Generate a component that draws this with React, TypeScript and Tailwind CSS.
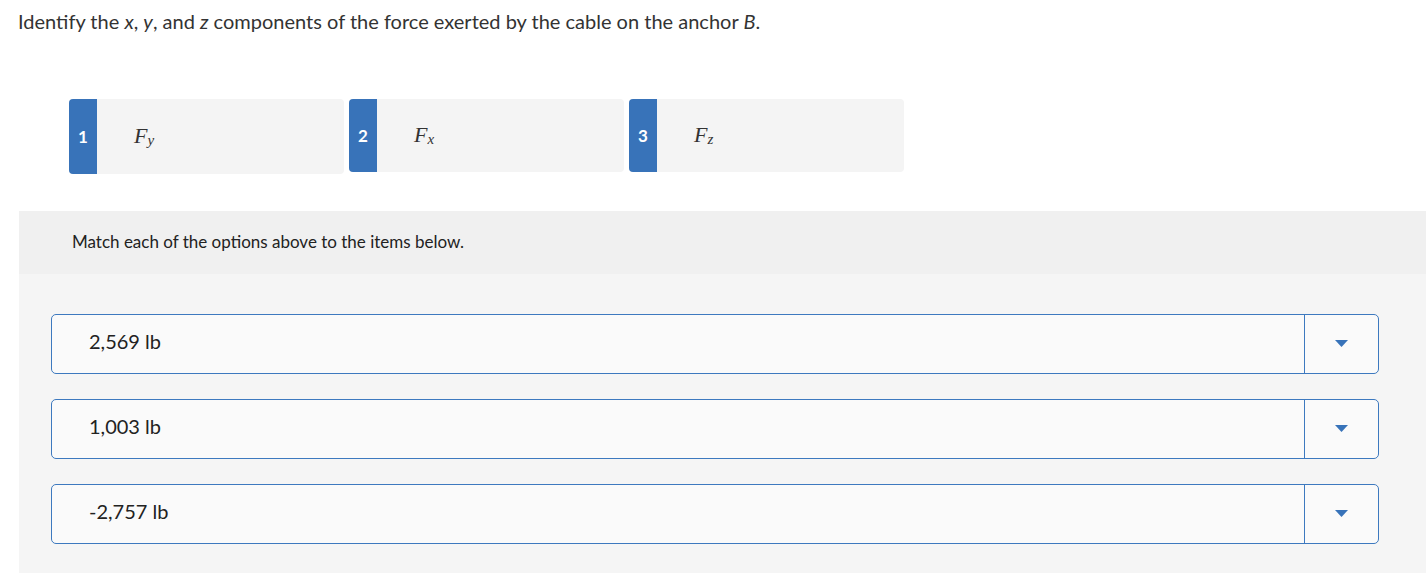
import { ReactNode } from "react";

const font = { fontFamily: "Lato, 'Liberation Sans', sans-serif" };

function MathVar({ sub }: { sub: string }) {
  return (
    <span
      className="text-[22px] text-[#333]"
      style={{ fontFamily: "'Liberation Serif', 'DejaVu Serif', serif" }}
    >
      <i>F</i>
      <sub className="text-[15px] italic relative top-[2px]">{sub}</sub>
    </span>
  );
}

function OptionCard({ num, children, tall }: { num: string; children: ReactNode; tall?: boolean }) {
  return (
    <div className={`flex w-[275px] ${tall ? "h-[75px]" : "h-[73px]"} rounded-[4px] bg-[#f4f4f4] overflow-hidden`}>
      <div className="w-[28px] bg-[#3873b9] flex items-center justify-center text-white text-[17px] font-bold">
        {num}
      </div>
      <div className="flex items-center pl-[37px] pb-[2px]">{children}</div>
    </div>
  );
}

function DropRow({ value }: { value: string }) {
  return (
    <div className="flex h-[60px] rounded-[5px] border border-[#3d79bf] bg-[#fafafa]">
      <div className="flex-1 flex items-center pl-[37px] pb-[6px] text-[20px] text-[#222]">{value}</div>
      <div className="w-[74px] border-l border-[#3d79bf] flex items-center justify-center">
        <svg width="13" height="8" viewBox="0 0 13 8">
          <path d="M0 0 H13 L6.5 7 Z" fill="#3873b9" />
        </svg>
      </div>
    </div>
  );
}

export default function App() {
  return (
    <div className="w-[1426px] h-[573px] bg-white overflow-hidden text-[#333]" style={font}>
      <p className="pl-[18px] pt-[8px] text-[20px] leading-[26px] text-[#333]">
        Identify the <i>x</i>, <i>y</i>, and <i>z</i> components of the force exerted by the cable on the anchor <i>B</i>.
      </p>

      <div className="flex gap-[5px] pl-[69px] mt-[65px]">
        <OptionCard num="1" tall>
          <MathVar sub="y" />
        </OptionCard>
        <OptionCard num="2">
          <MathVar sub="x" />
        </OptionCard>
        <OptionCard num="3">
          <MathVar sub="z" />
        </OptionCard>
      </div>

      <div className="ml-[19px] mt-[37px] rounded-tl-[4px] bg-[#f5f5f5] h-[400px]">
        <div className="h-[63px] bg-[#f0f0f0] flex items-center pl-[53px] pb-[2px] text-[17px] text-[#222]">
          Match each of the options above to the items below.
        </div>
        <div className="flex flex-col gap-[25px] pl-[32px] pr-[47px] pt-[40px]">
          <DropRow value="2,569 lb" />
          <DropRow value="1,003 lb" />
          <DropRow value="-2,757 lb" />
        </div>
      </div>
    </div>
  );
}
